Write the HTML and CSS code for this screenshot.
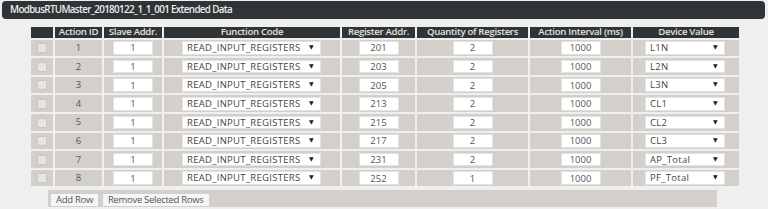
FILE: index.html
```html
<!DOCTYPE html>
<html>
<head>
<meta charset="utf-8">
<link rel="stylesheet" href="styles.css">
</head>
<body>
<div class="panel-title">ModbusRTUMaster_20180122_1_1_001 Extended Data</div>
<div class="table-wrap">
<table class="grid">
<colgroup>
<col class="c-chk"><col class="c-id"><col class="c-slave"><col class="c-func"><col class="c-reg"><col class="c-qty"><col class="c-int"><col class="c-dev">
</colgroup>
<thead>
<tr><th></th><th>Action ID</th><th>Slave Addr.</th><th>Function Code</th><th>Register Addr.</th><th>Quantity of Registers</th><th>Action Interval (ms)</th><th>Device Value</th></tr>
</thead>
<tbody>
<tr><td><span class="chk"></span></td><td>1</td><td><input class="num" value="1"></td><td><span class="sel sel-func">READ_INPUT_REGISTERS</span></td><td><input class="num" value="201"></td><td><input class="num" value="2"></td><td><input class="num" value="1000"></td><td><span class="sel sel-dev">L1N</span></td></tr>
<tr><td><span class="chk"></span></td><td>2</td><td><input class="num" value="1"></td><td><span class="sel sel-func">READ_INPUT_REGISTERS</span></td><td><input class="num" value="203"></td><td><input class="num" value="2"></td><td><input class="num" value="1000"></td><td><span class="sel sel-dev">L2N</span></td></tr>
<tr><td><span class="chk"></span></td><td>3</td><td><input class="num" value="1"></td><td><span class="sel sel-func">READ_INPUT_REGISTERS</span></td><td><input class="num" value="205"></td><td><input class="num" value="2"></td><td><input class="num" value="1000"></td><td><span class="sel sel-dev">L3N</span></td></tr>
<tr><td><span class="chk"></span></td><td>4</td><td><input class="num" value="1"></td><td><span class="sel sel-func">READ_INPUT_REGISTERS</span></td><td><input class="num" value="213"></td><td><input class="num" value="2"></td><td><input class="num" value="1000"></td><td><span class="sel sel-dev">CL1</span></td></tr>
<tr><td><span class="chk"></span></td><td>5</td><td><input class="num" value="1"></td><td><span class="sel sel-func">READ_INPUT_REGISTERS</span></td><td><input class="num" value="215"></td><td><input class="num" value="2"></td><td><input class="num" value="1000"></td><td><span class="sel sel-dev">CL2</span></td></tr>
<tr><td><span class="chk"></span></td><td>6</td><td><input class="num" value="1"></td><td><span class="sel sel-func">READ_INPUT_REGISTERS</span></td><td><input class="num" value="217"></td><td><input class="num" value="2"></td><td><input class="num" value="1000"></td><td><span class="sel sel-dev">CL3</span></td></tr>
<tr><td><span class="chk"></span></td><td>7</td><td><input class="num" value="1"></td><td><span class="sel sel-func">READ_INPUT_REGISTERS</span></td><td><input class="num" value="231"></td><td><input class="num" value="2"></td><td><input class="num" value="1000"></td><td><span class="sel sel-dev">AP_Total</span></td></tr>
<tr><td><span class="chk"></span></td><td>8</td><td><input class="num" value="1"></td><td><span class="sel sel-func">READ_INPUT_REGISTERS</span></td><td><input class="num" value="252"></td><td><input class="num" value="1"></td><td><input class="num" value="1000"></td><td><span class="sel sel-dev">PF_Total</span></td></tr>
</tbody>
</table>
</div>
<div class="actions">
<button class="btn">Add Row</button>
<button class="btn">Remove Selected Rows</button>
</div>
</body>
</html>
```
FILE: styles.css
```css
html, body {
  margin: 0;
  padding: 0;
  background: #efefef;
  font-family: "Open Sans", "DejaVu Sans", sans-serif;
  color: #444;
}
.panel-title {
  margin: 1px 0 0 2px;
  width: 755px;
  height: 18px;
  padding-left: 8px;
  background: #2f3537;
  border-radius: 4px;
  color: #ececec;
  font-size: 9.8px;
  font-weight: 600;
  line-height: 18px;
  letter-spacing: -0.65px;
}
.table-wrap {
  margin-top: 6px;
  padding-left: 29px;
}
.grid {
  border-collapse: separate;
  border-spacing: 2px;
  table-layout: fixed;
  width: 710px;
}
.c-chk { width: 22px; }
.c-id { width: 47px; }
.c-slave { width: 58px; }
.c-func { width: 176px; }
.c-reg { width: 73px; }
.c-qty { width: 111px; }
.c-int { width: 101px; }
.c-dev { width: 106px; }
.grid th {
  background: #2f3537;
  color: #e2e2e2;
  font-size: 9.6px;
  font-weight: 600;
  height: 10.7px;
  line-height: 10px;
  padding: 0;
  text-align: center;
  white-space: nowrap;
  letter-spacing: -0.3px;
}
.grid td {
  background: #d3d0cb;
  height: 16.6px;
  padding: 0;
  text-align: center;
  font-size: 9.5px;
  color: #555;
  line-height: 10px;
}
.chk {
  display: inline-block;
  width: 8px;
  height: 8px;
  border: 1px solid #c8c6c2;
  background: #e6e5e2;
  border-radius: 1px;
  vertical-align: middle;
}
.num {
  box-sizing: border-box;
  width: 40px;
  height: 13.5px;
  margin: 0;
  padding: 0;
  border: 1px solid #e2e2e2;
  background: #fff;
  font-family: inherit;
  font-size: 9.5px;
  color: #555;
  text-align: center;
  vertical-align: middle;
}
.sel {
  position: relative;
  display: inline-block;
  box-sizing: border-box;
  height: 13.5px;
  padding-left: 4px;
  border: 1px solid #e2e2e2;
  background: #fff;
  font-size: 9.5px;
  line-height: 11.5px;
  color: #444;
  text-align: left;
  vertical-align: middle;
  letter-spacing: 0.3px;
}
.sel::after {
  content: "▼";
  position: absolute;
  right: 6px;
  top: 0;
  font-size: 6px;
  color: #222;
  line-height: 11.5px;
}
.sel-func { width: 139px; margin-left: -1px; }
.sel-dev { width: 80px; margin-left: -2px; }
.actions {
  margin: 2px 0 0 48px;
  width: 669px;
  height: 17px;
  padding: 3px 0 0 2px;
  box-sizing: border-box;
  background: #d3d0cb;
  display: flex;
  gap: 3px;
  align-items: flex-start;
}
.btn {
  height: 14px;
  margin: 0;
  padding: 0 5px;
  border: 1px solid #d0d0d0;
  background: #f6f6f6;
  font-family: inherit;
  font-size: 9.5px;
  color: #555;
  line-height: 12px;
  letter-spacing: -0.3px;
}
```
